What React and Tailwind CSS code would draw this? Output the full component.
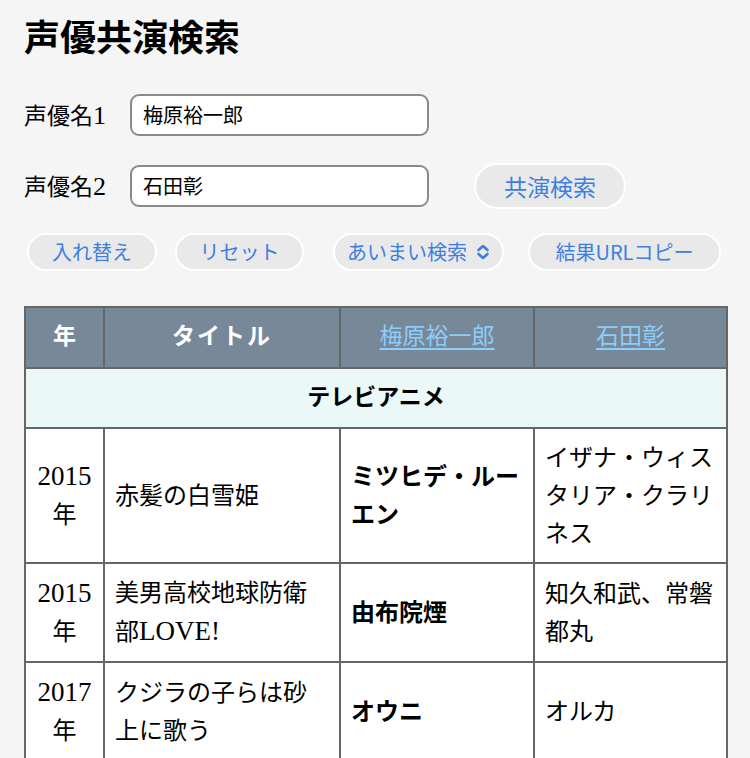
import React from 'react';

const serif = "font-['Liberation_Serif','Noto_Sans_CJK_JP',serif]";
const sans = "font-['Noto_Sans_CJK_JP','Noto_Sans',sans-serif]";

const L = ({ children }) => <span className="text-[27px]">{children}</span>;

const rows = [
  { year: '2015', title: '赤髪の白雪姫', a: 'ミツヒデ・ルーエン', b: 'イザナ・ウィスタリア・クラリネス', h: 'h-[135px]' },
  { year: '2015', title: <>美男高校地球防衛部<L>LOVE!</L></>, a: '由布院煙', b: '知久和武、常磐都丸', h: 'h-[99px]' },
  { year: '2017', title: 'クジラの子らは砂上に歌う', a: 'オウニ', b: 'オルカ', h: 'h-[99px]' },
];

function PillButton({ children, className = '' }) {
  return (
    <button className={`${sans} h-[38px] rounded-full border-2 border-white bg-[#e9e9e9] text-[#3d7fe0] text-[20px] leading-none flex items-center justify-center ${className}`}>
      {children}
    </button>
  );
}

export default function App() {
  return (
    <div className={`min-h-screen bg-[#f5f5f5] ${serif} text-black`}>
      <div className="px-6 pt-[16px]">
        <h1 className="text-[36px] font-bold leading-[46px]">声優共演検索</h1>

        {/* inputs */}
        <div className="mt-[32px] flex items-center h-[42px]">
          <span className="text-[23px] w-[106px]">声優名<span className="text-[26px]">1</span></span>
          <div className={`${sans} w-[299px] h-[42px] rounded-[9px] border-2 border-[#8a8a8a] bg-white flex items-center px-[11px] text-[20px]`}>
            梅原裕一郎
          </div>
        </div>
        <div className="mt-[28px] flex items-center h-[44px]">
          <span className="text-[23px] w-[106px]">声優名<span className="text-[26px]">2</span></span>
          <div className={`${sans} w-[299px] h-[42px] rounded-[9px] border-2 border-[#8a8a8a] bg-white flex items-center px-[11px] text-[20px]`}>
            石田彰
          </div>
          <PillButton className="ml-[45px] w-[152px] h-[46px] text-[23px]">共演検索</PillButton>
        </div>

        {/* action buttons */}
        <div className="mt-[25px] flex items-center">
          <PillButton className="ml-[3px] w-[130px]">入れ替え</PillButton>
          <PillButton className="ml-[18px] w-[129px]">リセット</PillButton>
          <PillButton className="ml-[29px] w-[171px] gap-[9px]">
            あいまい検索
            <svg width="14" height="16" viewBox="0 0 14 16" fill="none" stroke="#3d7fe0" strokeWidth="2.6" strokeLinecap="round" strokeLinejoin="round">
              <path d="M2.5 6 L7 2 L11.5 6" />
              <path d="M2.5 10 L7 14 L11.5 10" />
            </svg>
          </PillButton>
          <PillButton className="ml-[24px] w-[193px]">結果URLコピー</PillButton>
        </div>

        {/* results table */}
        <table className="mt-[35px] w-[702px] table-fixed border-collapse border-2 border-[#666] text-[24px]">
          <colgroup>
            <col className="w-[79px]" />
            <col className="w-[236px]" />
            <col className="w-[194px]" />
            <col className="w-[193px]" />
          </colgroup>
          <thead>
            <tr className="h-[61px] bg-[#778899] text-white font-bold text-[23px]">
              <th className="border-2 border-[#666]">年</th>
              <th className="border-2 border-[#666] tracking-[2px]">タイトル</th>
              <th className="border-2 border-[#666]">
                <span className="text-[#8ccdfa] underline underline-offset-[4px] font-normal">梅原裕一郎</span>
              </th>
              <th className="border-2 border-[#666]">
                <span className="text-[#8ccdfa] underline underline-offset-[4px] font-normal">石田彰</span>
              </th>
            </tr>
          </thead>
          <tbody>
            <tr className="h-[60px] bg-[#ebf8f8]">
              <td colSpan={4} className="border-2 border-[#666] text-center font-bold text-[23px]">テレビアニメ</td>
            </tr>
            {rows.map((r, i) => (
              <tr key={i} className={`${r.h} bg-white leading-[38px]`}>
                <td className="border-2 border-[#666] text-center px-[6px]">
                  <span className="text-[27px]">{r.year}</span>年
                </td>
                <td className="border-2 border-[#666] px-[10px]">{r.title}</td>
                <td className="border-2 border-[#666] px-[10px] font-bold">{r.a}</td>
                <td className="border-2 border-[#666] px-[10px]">{r.b}</td>
              </tr>
            ))}
          </tbody>
        </table>
      </div>
    </div>
  );
}
